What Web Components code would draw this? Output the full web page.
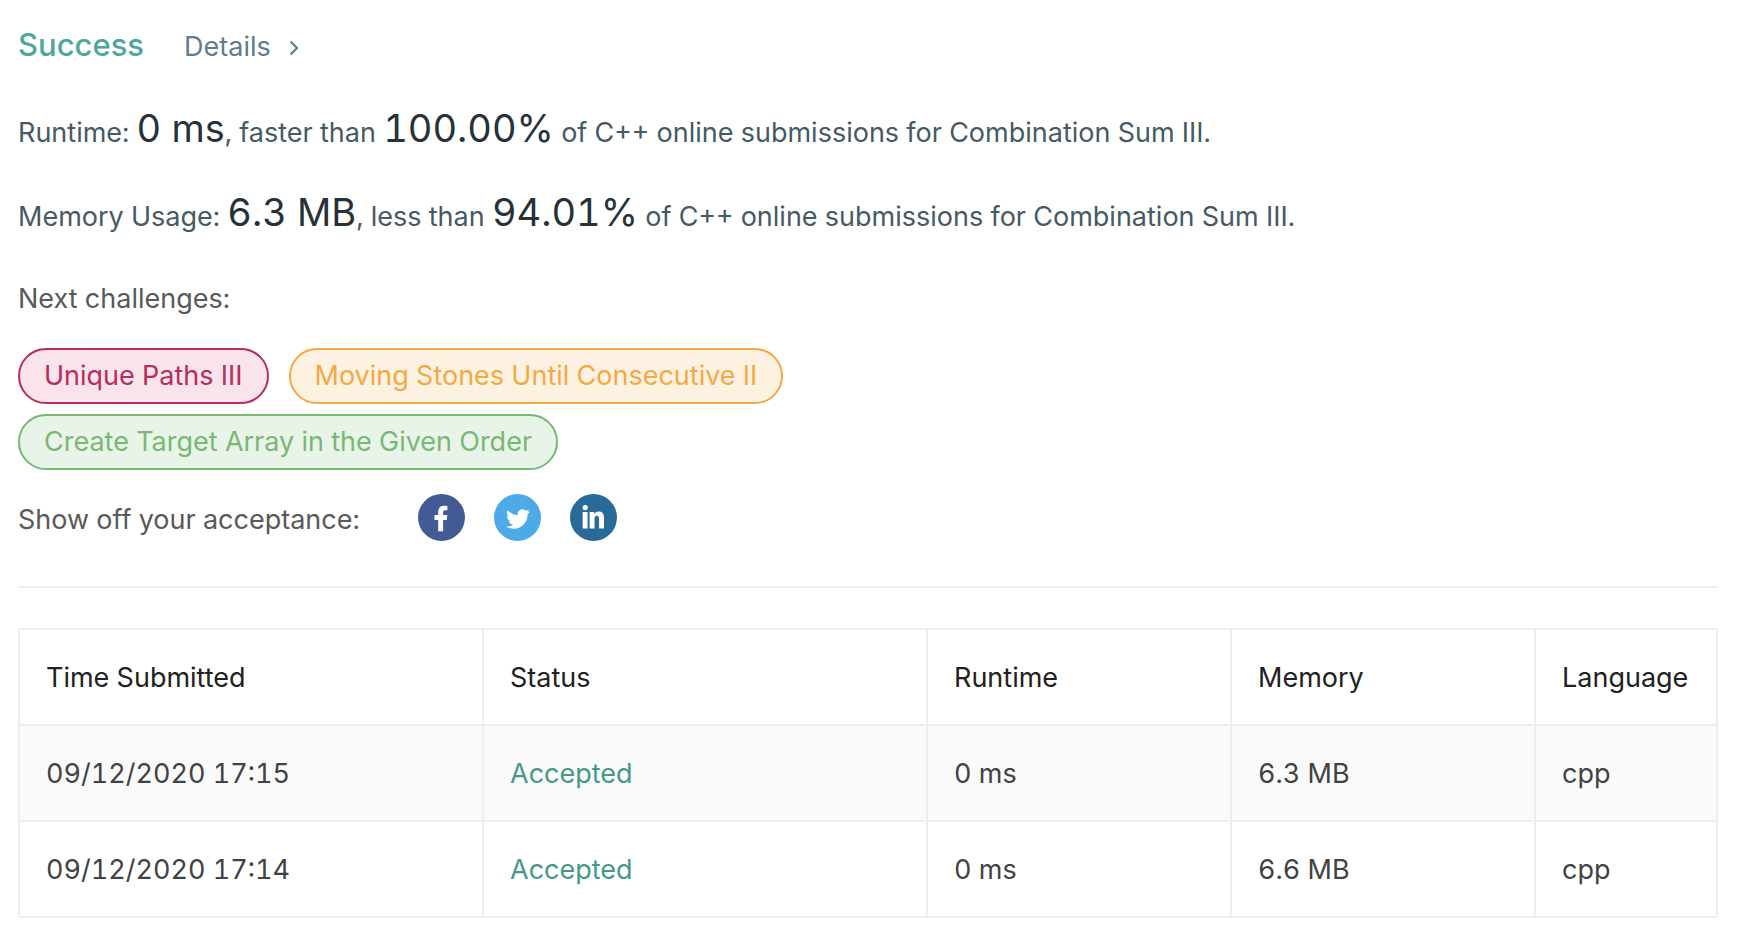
<!DOCTYPE html>
<html lang="en">
<head>
<meta charset="utf-8">
<meta name="viewport" content="width=device-width, initial-scale=1">
<title>Submission result</title>
<style>
body {
    margin: 0;
    background: #fff;
    font-family: Inter, "Liberation Sans", sans-serif;
    font-size: 27px;
    font-variant-numeric: tabular-nums;
    line-height: 40px;
    color: #595959;
}
</style>
</head>
<body>
<submission-result>
    <result-header slot="header" status="Success"></result-header>
    <result-stat slot="stats">Runtime: <strong>0 ms</strong>, faster than <strong>100.00%</strong> of C++ online submissions for Combination Sum III.</result-stat>
    <result-stat slot="stats">Memory Usage: <strong>6.3 MB</strong>, less than <strong>94.01%</strong> of C++ online submissions for Combination Sum III.</result-stat>
    <next-challenges slot="challenges">
        <challenge-tag level="hard">Unique Paths III</challenge-tag>
        <challenge-tag level="medium">Moving Stones Until Consecutive II</challenge-tag>
        <challenge-tag level="easy">Create Target Array in the Given Order</challenge-tag>
    </next-challenges>
    <share-bar slot="share"></share-bar>
    <submission-table></submission-table>
</submission-result>

<script>
class BaseElement extends HTMLElement {
    constructor() {
        super();
        this.attachShadow({ mode: 'open' });
        const template = document.createElement('template');
        template.innerHTML = this.constructor.markup;
        this.shadowRoot.appendChild(template.content.cloneNode(true));
    }
}

class SubmissionResult extends BaseElement {
    static markup = `
<style>
:host {
    display: block;
    padding: 25px 26px 24px 18px;
}
.stats {
    display: flex;
    flex-direction: column;
    gap: 35px;
    margin: 41px 0 38px;
}
.share {
    margin-top: 24px;
}
hr {
    height: 2px;
    margin: 45px 0 40px;
    border: 0;
    background: #eee;
}
</style>
<slot name="header"></slot>
<div class="stats"><slot name="stats"></slot></div>
<slot name="challenges"></slot>
<div class="share"><slot name="share"></slot></div>
<hr>
<slot></slot>
`;
}

class ResultHeader extends BaseElement {
    static markup = `
<style>
:host {
    display: flex;
    align-items: baseline;
    gap: 40px;
}
h1 {
    margin: 0;
    font-size: 31px;
    font-weight: 500;
    line-height: 40px;
    color: #4da79b;
}
a {
    display: flex;
    align-items: center;
    gap: 18px;
    color: #607d8b;
    text-decoration: none;
}
svg {
    width: 10px;
    height: 16px;
    margin-top: 2px;
}
</style>
<h1></h1>
<a href="#details">Details
    <svg viewBox="0 0 10 16" fill="none" stroke="currentColor" stroke-width="2.2" aria-hidden="true"><path d="M1.5 1.5 8 8l-6.5 6.5"/></svg>
</a>
`;

    connectedCallback() {
        this.shadowRoot.querySelector('h1').textContent = this.getAttribute('status');
    }
}

class ResultStat extends BaseElement {
    static markup = `
<style>
:host {
    display: block;
    line-height: 48px;
    color: #455a64;
}
p {
    margin: 0;
}
::slotted(strong) {
    font-size: 38px;
    font-weight: 400;
    line-height: 40px;
    color: #263238;
}
</style>
<p><slot></slot></p>
`;
}

class NextChallenges extends BaseElement {
    static markup = `
<style>
:host {
    display: block;
}
h2 {
    margin: 0 0 29px;
    font-size: inherit;
    font-weight: 400;
}
.tags {
    display: flex;
    flex-wrap: wrap;
    gap: 10px 20px;
    max-width: 1000px;
}
</style>
<h2>Next challenges:</h2>
<div class="tags"><slot></slot></div>
`;
}

class ChallengeTag extends BaseElement {
    static markup = `
<style>
:host {
    display: block;
    --tag: #7ab774;
    --tag-bg: #e9f4e8;
}
:host([level="medium"]) {
    --tag: #f4a944;
    --tag-bg: #fdf2e1;
}
:host([level="hard"]) {
    --tag: #b72c60;
    --tag-bg: #f8e4ea;
}
a {
    display: block;
    padding: 6px 24px;
    border: 2px solid var(--tag);
    border-radius: 28px;
    background: var(--tag-bg);
    color: var(--tag);
    text-decoration: none;
}
</style>
<a href="#challenge"><slot></slot></a>
`;
}

class ShareBar extends BaseElement {
    static markup = `
<style>
:host {
    display: flex;
    align-items: center;
    gap: 58px;
}
span {
    padding-top: 4px;
}
.buttons {
    display: flex;
    gap: 29px;
}
button {
    display: block;
    width: 47px;
    height: 47px;
    padding: 0;
    border: 0;
    border-radius: 50%;
    background: #435a94;
    cursor: pointer;
}
.twitter {
    background: #4daae9;
}
.linkedin {
    background: #2a6a98;
}
svg {
    display: block;
    fill: #fff;
}
</style>
<span>Show off your acceptance:</span>
<div class="buttons">
    <button type="button" aria-label="Share on Facebook">
        <svg viewBox="0 0 47 47"><path d="M20.2 37.2V25.9h-3.7v-4.8h3.7v-3c0-4.1 2.100-6.300 5.800-6.300 1.300 0 2.600.1 3.400.3v4.200h-2.100c-1.700 0-2.200.8-2.200 2.200v2.600h4.200l-.6 4.800h-3.600v11.300z"/></svg>
    </button>
    <button type="button" class="twitter" aria-label="Share on Twitter">
        <svg viewBox="0 0 47 47"><path transform="translate(12 13)" d="M23.950 4.570a10 10 0 0 1-2.820.77 4.960 4.960 0 0 0 2.160-2.720c-.95.55-2 .95-3.130 1.180a4.920 4.920 0 0 0-8.380 4.480C7.690 8.100 4.070 6.130 1.640 3.160a4.820 4.820 0 0 0-.67 2.480c0 1.710.87 3.210 2.190 4.100a4.900 4.900 0 0 1-2.230-.62v.06c0 2.390 1.700 4.380 3.950 4.830a5 5 0 0 1-2.220.08 4.940 4.940 0 0 0 4.600 3.420A9.870 9.870 0 0 1 0 19.540 13.940 13.940 0 0 0 7.550 21.750c9.050 0 14-7.500 14-13.990 0-.21 0-.42-.02-.63a9.940 9.940 0 0 0 2.460-2.550z"/></svg>
    </button>
    <button type="button" class="linkedin" aria-label="Share on LinkedIn">
        <svg viewBox="0 0 47 47"><circle cx="15.2" cy="13.7" r="2.6"/><path d="M12.7 18h4.900v16.600h-4.900zM19.600 18h4.600v2.300c.9-1.700 2.500-2.700 4.500-2.700 3.900 0 5.300 2.600 5.300 6.700v10.300h-4.900v-9.400c0-2.100-.4-3.500-2.200-3.500s-2.400 1.300-2.400 3.300v9.600h-4.900z"/></svg>
    </button>
</div>
`;
}

const submissions = [
    { time: '09/12/2020 17:15', status: 'Accepted', runtime: '0 ms', memory: '6.3 MB', language: 'cpp' },
    { time: '09/12/2020 17:14', status: 'Accepted', runtime: '0 ms', memory: '6.6 MB', language: 'cpp' }
];

class SubmissionTable extends BaseElement {
    static markup = `
<style>
:host {
    display: block;
}
table {
    width: 100%;
    table-layout: fixed;
    border-collapse: collapse;
    color: #424242;
}
.time {
    width: 464px;
}
.status {
    width: 444px;
}
.metric {
    width: 304px;
}
.language {
    width: 182px;
}
th, td {
    padding: 28px 26px 26px;
    border: 2px solid #eee;
    font-weight: 400;
    text-align: left;
}
th {
    color: #212121;
}
tbody tr:nth-child(odd) {
    background: #fafafa;
}
a {
    color: #45998a;
    text-decoration: none;
}
</style>
<table>
    <colgroup><col class="time"><col class="status"><col class="metric"><col class="metric"><col class="language"></colgroup>
    <thead>
        <tr><th scope="col">Time Submitted</th><th scope="col">Status</th><th scope="col">Runtime</th><th scope="col">Memory</th><th scope="col">Language</th></tr>
    </thead>
    <tbody></tbody>
</table>
`;

    connectedCallback() {
        this.shadowRoot.querySelector('tbody').innerHTML = submissions.map(item => `
            <tr>
                <td>${item.time}</td>
                <td><a href="#submission">${item.status}</a></td>
                <td>${item.runtime}</td>
                <td>${item.memory}</td>
                <td>${item.language}</td>
            </tr>`).join('');
    }
}

window.customElements.define('submission-result', SubmissionResult);
window.customElements.define('result-header', ResultHeader);
window.customElements.define('result-stat', ResultStat);
window.customElements.define('next-challenges', NextChallenges);
window.customElements.define('challenge-tag', ChallengeTag);
window.customElements.define('share-bar', ShareBar);
window.customElements.define('submission-table', SubmissionTable);
</script>
</body>
</html>
